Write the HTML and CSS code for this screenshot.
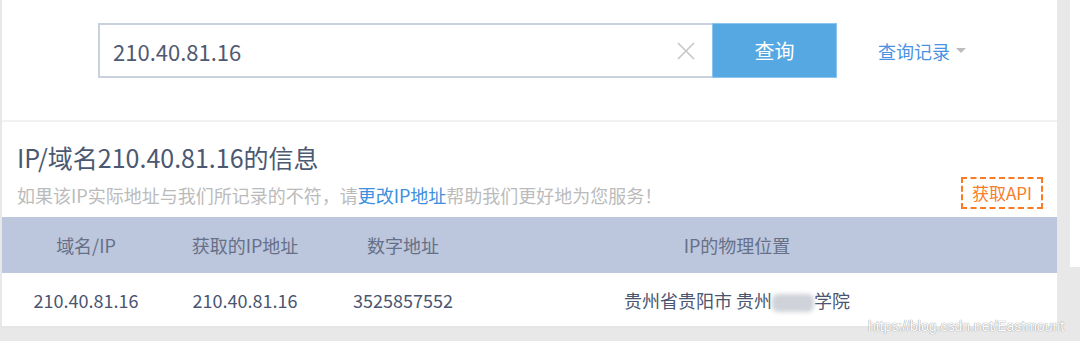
FILE: index.html
```html
<!DOCTYPE html>
<html>

<head>
    <meta charset="UTF-8">
    <title>IP查询</title>
    <link rel="stylesheet" href="styles.css">
</head>

<body>
    <div class="page">
        <div class="main">
            <div class="search-card">
                <div class="search-box">
                    <div class="search-input">
                        <span class="search-text">210.40.81.16</span>
                        <svg class="clear-icon" width="18" height="18" viewBox="0 0 18 18">
                            <path d="M1 1 L17 17 M17 1 L1 17" stroke="#c6c6c6" stroke-width="1.6" fill="none" />
                        </svg>
                    </div>
                    <button class="search-btn">查询</button>
                    <a class="history-link">查询记录<span class="caret"></span></a>
                </div>
            </div>

            <div class="info-card">
                <h2 class="info-title">IP/域名210.40.81.16的信息</h2>
                <div class="info-row">
                    <p class="info-tip">如果该IP实际地址与我们所记录的不符，请<a class="tip-link">更改IP地址</a>帮助我们更好地为您服务！</p>
                    <a class="api-btn">获取API</a>
                </div>

                <div class="ip-table">
                    <div class="table-head">
                        <div>域名/IP</div>
                        <div>获取的IP地址</div>
                        <div>数字地址</div>
                        <div>IP的物理位置</div>
                        <div></div>
                    </div>
                    <div class="table-row">
                        <div>210.40.81.16</div>
                        <div>210.40.81.16</div>
                        <div>3525857552</div>
                        <div>贵州省贵阳市 贵州<span class="blur"></span>学院</div>
                        <div></div>
                    </div>
                </div>
            </div>
        </div>
        <div class="side"></div>
    </div>

    <div class="watermark">https://blog.csdn.net/Eastmount</div>
</body>

</html>
```

FILE: styles.css
```css
body {
    margin: 0;
    background-color: #e8e8e8;
    font-family: "Microsoft YaHei", "Noto Sans CJK SC", sans-serif;
    overflow: hidden;
}

.page {
    display: flex;
    align-items: flex-start;
    padding-left: 2px;
}

.main {
    width: 1055px;
    background: #f2f2f2;
}

.side {
    width: 10px;
    height: 267px;
    margin-left: 13px;
    background: white;
}

/* 搜索区 */
.search-card {
    height: 120px;
    background: white;
    box-sizing: border-box;
    padding: 23px 0 0 96px;
}

.search-box {
    display: flex;
    align-items: center;
}

.search-input {
    width: 614px;
    height: 55px;
    box-sizing: border-box;
    border: 2px solid #c9d1df;
    border-right: none;
    display: flex;
    align-items: center;
    justify-content: space-between;
    padding: 0 17px 0 13px;
}

.search-text {
    font-size: 22px;
    color: #4f5a72;
}

.search-btn {
    width: 125px;
    height: 55px;
    border: 1px solid #8cc4ef;
    background-color: #56a8e3;
    color: white;
    font-family: inherit;
    font-size: 20px;
    padding: 0;
}

.history-link {
    margin-left: 41px;
    font-size: 18px;
    color: #4a92e4;
    display: flex;
    align-items: center;
}

.caret {
    width: 0;
    height: 0;
    margin-left: 6px;
    border-left: 5px solid transparent;
    border-right: 5px solid transparent;
    border-top: 5px solid #bdbdbd;
}

/* 信息区 */
.info-card {
    margin-top: 2px;
    background: white;
    position: relative;
}

.info-title {
    margin: 0;
    padding: 19px 0 0 15px;
    font-size: 25px;
    line-height: 32px;
    font-weight: normal;
    color: #4b5872;
}

.info-row {
    display: flex;
    justify-content: space-between;
    align-items: flex-end;
    margin-top: 4px;
    padding: 0 14px 8px 15px;
}

.info-tip {
    margin: 0 0 1px 0;
    font-size: 18px;
    line-height: 26px;
    color: #bbbbbb;
}

.tip-link {
    color: #3d8fe0;
}

.api-btn {
    height: 32px;
    box-sizing: border-box;
    border: 2px dashed #fb7a22;
    padding: 0 9px;
    font-size: 17px;
    line-height: 28px;
    color: #f97c26;
}

.ip-table {
    font-size: 18px;
}

.table-head,
.table-row {
    display: grid;
    grid-template-columns: 168px 150px 166px 502px 1fr;
    align-items: center;
    text-align: center;
}

.table-head {
    height: 56px;
    background-color: #bcc6dc;
    color: #667089;
}

.table-row {
    height: 55px;
    box-sizing: border-box;
    border-bottom: 2px solid #e6e6e6;
    color: #4a5570;
}

.blur {
    display: inline-block;
    width: 42px;
    height: 18px;
    vertical-align: middle;
    background: #cfd2d9;
    border-radius: 6px;
    filter: blur(2px);
}

.watermark {
    position: absolute;
    left: 868px;
    top: 317px;
    font-family: "Liberation Sans", Arial, sans-serif;
    font-size: 14px;
    line-height: 18px;
    color: white;
    text-shadow: 0 0 1px #9a9a9a, 0 0 1px #9a9a9a;
}
```
